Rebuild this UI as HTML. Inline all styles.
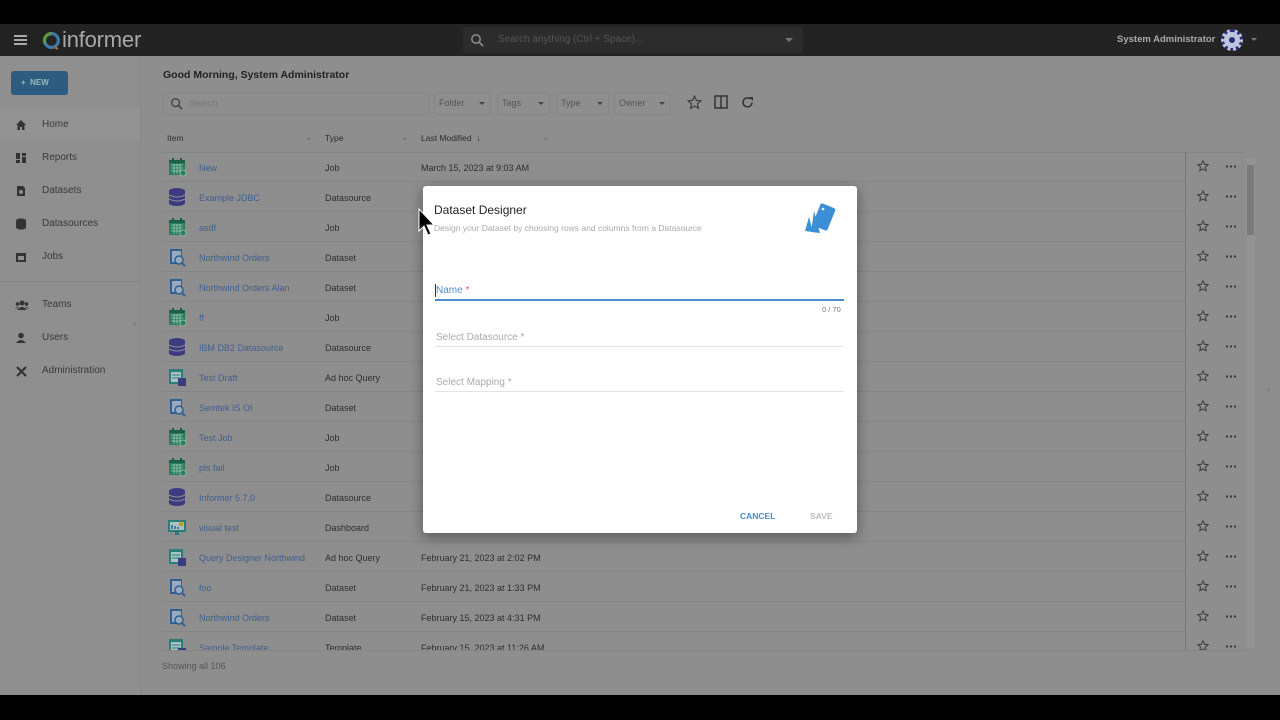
<!DOCTYPE html>
<html><head><meta charset="utf-8"><style>
*{margin:0;padding:0;box-sizing:border-box}
body{width:1280px;height:720px;background:#000;font-family:"Liberation Sans",sans-serif;position:relative;overflow:hidden}
.top{position:absolute;top:24px;left:0;width:1280px;height:32px;background:#232323}
.main{position:absolute;top:56px;left:0;width:1280px;height:639px;background:#8e8e8e}
.side{position:absolute;top:56px;left:0;width:141px;height:639px;background:#8f8f8f;border-right:1px solid #868686}
.nav{position:absolute;left:0;width:140px;height:32px;font-size:10px;color:#3a3a3a}
.nav span{position:absolute;left:42px;top:10px}
.nav svg{position:absolute;left:15px;top:10px}
.t{position:absolute;font-size:9px;color:#2e2e2e;white-space:nowrap}
.lk{color:#3f5f8e}
.row{position:absolute;left:162px;width:1023px;height:30px;border-bottom:1px solid #858585}
.star{position:absolute;left:1196px}
.dots{position:absolute;left:1225px;width:12px;height:3px;background:radial-gradient(circle,#3a3a3a 1.1px,transparent 1.3px) 0 0/4px 3px repeat-x}
.filt{position:absolute;top:92px;height:23px;border:1px solid #858585;border-radius:3px;font-size:9px;color:#555}
.modal{position:absolute;left:423px;top:186px;width:434px;height:347px;background:#fff;border-radius:3px;box-shadow:0 4px 14px rgba(0,0,0,.4)}
</style></head><body>
<svg width="0" height="0" style="position:absolute"><defs>
<symbol id="job" viewBox="0 0 20 20"><rect x="2" y="3" width="16" height="15" fill="#2b7d5c"/><rect x="2" y="3" width="16" height="3" fill="#1d5e44"/><rect x="5" y="1" width="2" height="4" fill="#1d5e44"/><rect x="13" y="1" width="2" height="4" fill="#1d5e44"/><path d="M4 8h12M4 11h12M4 14h12M7 7v10M10 7v10M13 7v10" stroke="#9ec8b5" stroke-width=".8"/><circle cx="16" cy="16" r="3" fill="#2b7d5c" stroke="#9ec8b5" stroke-width=".8"/></symbol>
<symbol id="db" viewBox="0 0 20 20"><ellipse cx="10" cy="4" rx="8" ry="3" fill="#3c3b80"/><rect x="2" y="4" width="16" height="12" fill="#3c3b80"/><ellipse cx="10" cy="16" rx="8" ry="3" fill="#3c3b80"/><path d="M2 8q8 4 16 0M2 12q8 4 16 0" stroke="#8e8e8e" stroke-width="1" fill="none"/></symbol>
<symbol id="ds" viewBox="0 0 20 20"><rect x="3" y="2" width="12" height="15" fill="#2f5f95"/><rect x="5" y="4" width="9" height="11" fill="#9ab"/><circle cx="12" cy="13" r="4" fill="#9ab" stroke="#2f5f95" stroke-width="1.5"/><path d="M15 16l3 3" stroke="#2f5f95" stroke-width="2"/></symbol>
<symbol id="aq" viewBox="0 0 20 20"><rect x="2" y="2" width="14" height="15" fill="#2b7d7a"/><rect x="4" y="5" width="10" height="10" fill="#a8c4c2"/><path d="M5 8h8M5 11h8" stroke="#2b7d7a"/><rect x="11" y="11" width="8" height="8" fill="#3c3b80"/></symbol>
<symbol id="dash" viewBox="0 0 20 20"><rect x="1" y="3" width="18" height="12" fill="#2b7d7a"/><rect x="3" y="5" width="14" height="8" fill="#a8c4c2"/><path d="M5 12V8M8 12V9M11 12V10" stroke="#2f5f95" stroke-width="1.5"/><circle cx="14" cy="7" r="2.5" fill="#b89a3a"/><path d="M8 15v3h4v-3" fill="#2b7d7a"/></symbol>
<symbol id="st" viewBox="0 0 24 24"><path d="M12 3l2.6 6 6.4.6-4.9 4.3 1.5 6.3L12 17l-5.6 3.2 1.5-6.3L3 9.6l6.4-.6z" fill="none" stroke="#3a3a3a" stroke-width="1.6"/></symbol>
</defs></svg>

<div class="top">
<div style="position:absolute;left:14px;top:11px;width:13px;height:2px;background:#aaa;box-shadow:0 4px #aaa,0 8px #aaa"></div>
<svg style="position:absolute;left:42px;top:7px" width="19" height="19" viewBox="0 0 18 18"><circle cx="9" cy="9" r="6.5" fill="none" stroke="#3c7aa8" stroke-width="3"/><path d="M9 2.5A6.5 6.5 0 0 0 3 12" fill="none" stroke="#5a9a3a" stroke-width="3"/><path d="M12 15.5l3 1.5" stroke="#b86a2a" stroke-width="2"/></svg>
<div style="position:absolute;left:62px;top:3px;font-size:22px;color:#a8a8a8;letter-spacing:-.2px">informer</div>
<div style="position:absolute;left:463px;top:3px;width:340px;height:26px;background:#2c2c2c;border-radius:3px"></div>
<svg style="position:absolute;left:470px;top:9px" width="14" height="14" viewBox="0 0 14 14"><circle cx="6" cy="6" r="4.2" fill="none" stroke="#888" stroke-width="1.6"/><path d="M9 9l4 4" stroke="#888" stroke-width="1.8"/></svg>
<div style="position:absolute;left:498px;top:10px;font-size:10px;color:#555">Search anything (Ctrl + Space)...</div>
<div style="position:absolute;left:785px;top:14px;border:4px solid transparent;border-top:4px solid #777"></div>
<div style="position:absolute;left:1117px;top:10px;font-size:9.5px;color:#aaa;font-weight:bold">System Administrator</div>
<div style="position:absolute;left:1221px;top:5px;width:22px;height:22px;border-radius:50%;background:#c0c4dc;border:3px dotted #2a2f78"><div style="position:absolute;left:5px;top:5px;width:6px;height:6px;border-radius:50%;background:#2a2f78"></div></div>
<div style="position:absolute;left:1251px;top:14px;border:3px solid transparent;border-top:3px solid #777"></div>
</div>

<div class="main"></div>
<div class="side">
<div style="position:absolute;left:11px;top:15px;width:57px;height:24px;background:#2e5b80;border-radius:3px;color:#9bb;font-size:8px;font-weight:bold;line-height:24px;padding-left:10px">+&nbsp; NEW</div>
<div class="nav" style="top:53px;background:#939393"><svg width="12" height="12" viewBox="0 0 12 12"><path d="M1 6L6 1l5 5H9.5v5h-2.5V8H5v3H2.5V6z" fill="#333"/></svg><span>Home</span></div>
<div class="nav" style="top:86px"><svg width="12" height="12" viewBox="0 0 12 12"><path d="M1 1h4v6H1zM7 1h4v3H7zM1 8h4v3H1zM7 5h4v6H7z" fill="#333"/></svg><span>Reports</span></div>
<div class="nav" style="top:119px"><svg width="12" height="12" viewBox="0 0 12 12"><path d="M2 1h6l2 2v8H2z" fill="#333"/><circle cx="6" cy="7" r="2" fill="#8f8f8f"/></svg><span>Datasets</span></div>
<div class="nav" style="top:152px"><svg width="12" height="12" viewBox="0 0 12 12"><ellipse cx="6" cy="2.5" rx="5" ry="2" fill="#333"/><rect x="1" y="2.5" width="10" height="7" fill="#333"/><ellipse cx="6" cy="9.5" rx="5" ry="2" fill="#333"/></svg><span>Datasources</span></div>
<div class="nav" style="top:185px"><svg width="12" height="12" viewBox="0 0 12 12"><rect x="1" y="2" width="10" height="9" fill="#333"/><rect x="3" y="5" width="6" height="4" fill="#8f8f8f"/></svg><span>Jobs</span></div>
<div style="position:absolute;left:0;top:225px;width:140px;border-top:1px solid #858585"></div>
<div class="nav" style="top:233px"><svg width="14" height="12" viewBox="0 0 14 12"><circle cx="7" cy="4" r="2.5" fill="#333"/><circle cx="2.5" cy="5" r="1.8" fill="#333"/><circle cx="11.5" cy="5" r="1.8" fill="#333"/><path d="M2 11q5-6 10 0M0 10q2-3 4-2M10 8q2-1 4 2" fill="#333"/></svg><span>Teams</span></div>
<div class="nav" style="top:266px"><svg width="12" height="12" viewBox="0 0 12 12"><circle cx="6" cy="3.5" r="2.8" fill="#333"/><path d="M1 11q5-6 10 0z" fill="#333"/></svg><span>Users</span></div>
<div class="nav" style="top:299px"><svg width="13" height="13" viewBox="0 0 13 13"><path d="M2 2l9 9M11 2L2 11" stroke="#333" stroke-width="2.2"/></svg><span>Administration</span></div>
<div style="position:absolute;left:133px;top:262px;font-size:9px;color:#666">‹</div>
</div>

<div class="t" style="left:163px;top:69px;font-size:10.5px;font-weight:bold;color:#222">Good Morning, System Administrator</div>
<div class="filt" style="left:163px;width:266px"><svg style="position:absolute;left:6px;top:4px" width="13" height="13" viewBox="0 0 14 14"><circle cx="6" cy="6" r="4.2" fill="none" stroke="#444" stroke-width="1.5"/><path d="M9 9l4 4" stroke="#444" stroke-width="1.7"/></svg><span style="position:absolute;left:25px;top:5px;color:#777">Search</span></div>
<div class="filt" style="left:434px;width:57px"><span style="position:absolute;left:4px;top:5px">Folder</span><i style="position:absolute;right:5px;top:9px;border:3px solid transparent;border-top:3px solid #444"></i></div>
<div class="filt" style="left:497px;width:53px"><span style="position:absolute;left:4px;top:5px">Tags</span><i style="position:absolute;right:5px;top:9px;border:3px solid transparent;border-top:3px solid #444"></i></div>
<div class="filt" style="left:556px;width:53px"><span style="position:absolute;left:4px;top:5px">Type</span><i style="position:absolute;right:5px;top:9px;border:3px solid transparent;border-top:3px solid #444"></i></div>
<div class="filt" style="left:614px;width:57px"><span style="position:absolute;left:4px;top:5px">Owner</span><i style="position:absolute;right:5px;top:9px;border:3px solid transparent;border-top:3px solid #444"></i></div>
<svg style="position:absolute;left:686px;top:94px" width="17" height="17"><use href="#st"/></svg>
<svg style="position:absolute;left:714px;top:95px" width="14" height="14" viewBox="0 0 14 14"><rect x="1" y="1" width="12" height="12" fill="none" stroke="#333" stroke-width="1.5"/><path d="M7 1v12" stroke="#333" stroke-width="1.5"/></svg>
<svg style="position:absolute;left:741px;top:96px" width="13" height="13" viewBox="0 0 13 13"><path d="M11 6.5A4.5 4.5 0 1 1 9.5 3" fill="none" stroke="#333" stroke-width="1.5"/><path d="M8 1h4v4z" fill="#333"/></svg>

<div class="t" style="left:167px;top:133px;font-size:8.5px">Item</div>
<div class="t" style="left:325px;top:133px;font-size:8.5px">Type</div>
<div class="t" style="left:421px;top:133px;font-size:8.5px">Last Modified &nbsp;↓</div>
<div class="t" style="left:305px;top:132px;color:#666">⌄</div><div class="t" style="left:401px;top:132px;color:#666">⌄</div><div class="t" style="left:542px;top:132px;color:#666">⌄</div>
<div style="position:absolute;left:162px;top:152px;width:1084px;border-top:1px solid #858585"></div>
<div style="position:absolute;left:1185px;top:152px;width:1px;height:498px;background:#777"></div>
<div style="position:absolute;left:1246px;top:158px;width:9px;height:490px;background:#939393"></div>
<div style="position:absolute;left:1247px;top:165px;width:7px;height:70px;background:#7a7a7a"></div>

<div class="row" style="top:152px"></div><svg style="position:absolute;left:167px;top:157px" width="20" height="20"><use href="#job"/></svg><div class="t lk" style="left:199px;top:163px">New</div><div class="t" style="left:325px;top:163px">Job</div><div class="t" style="left:421px;top:163px">March 15, 2023 at 9:03 AM</div>
<div class="row" style="top:182px"></div><svg style="position:absolute;left:167px;top:187px" width="20" height="20"><use href="#db"/></svg><div class="t lk" style="left:199px;top:193px">Example JDBC</div><div class="t" style="left:325px;top:193px">Datasource</div>
<div class="row" style="top:212px"></div><svg style="position:absolute;left:167px;top:217px" width="20" height="20"><use href="#job"/></svg><div class="t lk" style="left:199px;top:223px">asdf</div><div class="t" style="left:325px;top:223px">Job</div>
<div class="row" style="top:242px"></div><svg style="position:absolute;left:167px;top:247px" width="20" height="20"><use href="#ds"/></svg><div class="t lk" style="left:199px;top:253px">Northwind Orders</div><div class="t" style="left:325px;top:253px">Dataset</div>
<div class="row" style="top:272px"></div><svg style="position:absolute;left:167px;top:277px" width="20" height="20"><use href="#ds"/></svg><div class="t lk" style="left:199px;top:283px">Northwind Orders Alan</div><div class="t" style="left:325px;top:283px">Dataset</div>
<div class="row" style="top:302px"></div><svg style="position:absolute;left:167px;top:307px" width="20" height="20"><use href="#job"/></svg><div class="t lk" style="left:199px;top:313px">ff</div><div class="t" style="left:325px;top:313px">Job</div>
<div class="row" style="top:332px"></div><svg style="position:absolute;left:167px;top:337px" width="20" height="20"><use href="#db"/></svg><div class="t lk" style="left:199px;top:343px">IBM DB2 Datasource</div><div class="t" style="left:325px;top:343px">Datasource</div>
<div class="row" style="top:362px"></div><svg style="position:absolute;left:167px;top:367px" width="20" height="20"><use href="#aq"/></svg><div class="t lk" style="left:199px;top:373px">Test Draft</div><div class="t" style="left:325px;top:373px">Ad hoc Query</div>
<div class="row" style="top:392px"></div><svg style="position:absolute;left:167px;top:397px" width="20" height="20"><use href="#ds"/></svg><div class="t lk" style="left:199px;top:403px">Semtek IS OI</div><div class="t" style="left:325px;top:403px">Dataset</div>
<div class="row" style="top:422px"></div><svg style="position:absolute;left:167px;top:427px" width="20" height="20"><use href="#job"/></svg><div class="t lk" style="left:199px;top:433px">Test Job</div><div class="t" style="left:325px;top:433px">Job</div>
<div class="row" style="top:452px"></div><svg style="position:absolute;left:167px;top:457px" width="20" height="20"><use href="#job"/></svg><div class="t lk" style="left:199px;top:463px">pls fail</div><div class="t" style="left:325px;top:463px">Job</div>
<div class="row" style="top:482px"></div><svg style="position:absolute;left:167px;top:487px" width="20" height="20"><use href="#db"/></svg><div class="t lk" style="left:199px;top:493px">Informer 5.7.0</div><div class="t" style="left:325px;top:493px">Datasource</div>
<div class="row" style="top:512px"></div><svg style="position:absolute;left:167px;top:517px" width="20" height="20"><use href="#dash"/></svg><div class="t lk" style="left:199px;top:523px">visual test</div><div class="t" style="left:325px;top:523px">Dashboard</div>
<div class="row" style="top:542px"></div><svg style="position:absolute;left:167px;top:547px" width="20" height="20"><use href="#aq"/></svg><div class="t lk" style="left:199px;top:553px">Query Designer Northwind</div><div class="t" style="left:325px;top:553px">Ad hoc Query</div><div class="t" style="left:421px;top:553px">February 21, 2023 at 2:02 PM</div>
<div class="row" style="top:572px"></div><svg style="position:absolute;left:167px;top:577px" width="20" height="20"><use href="#ds"/></svg><div class="t lk" style="left:199px;top:583px">foo</div><div class="t" style="left:325px;top:583px">Dataset</div><div class="t" style="left:421px;top:583px">February 21, 2023 at 1:33 PM</div>
<div class="row" style="top:602px"></div><svg style="position:absolute;left:167px;top:607px" width="20" height="20"><use href="#ds"/></svg><div class="t lk" style="left:199px;top:613px">Northwind Orders</div><div class="t" style="left:325px;top:613px">Dataset</div><div class="t" style="left:421px;top:613px">February 15, 2023 at 4:31 PM</div>
<div style="position:absolute;left:162px;top:632px;width:1084px;height:18px;overflow:hidden"><svg style="position:absolute;left:5px;top:5px" width="20" height="20"><use href="#aq"/></svg><div class="t lk" style="left:37px;top:11px">Sample Template</div><div class="t" style="left:163px;top:11px">Template</div><div class="t" style="left:259px;top:11px">February 15, 2023 at 11:26 AM</div></div>
<div style="position:absolute;left:162px;top:650px;width:1084px;border-top:1px solid #858585"></div>
<div class="t" style="left:162px;top:661px;color:#555">Showing all 106</div>

<svg class="star" style="top:159px" width="14" height="14"><use href="#st"/></svg><div class="dots" style="top:165px"></div>
<svg class="star" style="top:189px" width="14" height="14"><use href="#st"/></svg><div class="dots" style="top:195px"></div>
<svg class="star" style="top:219px" width="14" height="14"><use href="#st"/></svg><div class="dots" style="top:225px"></div>
<svg class="star" style="top:249px" width="14" height="14"><use href="#st"/></svg><div class="dots" style="top:255px"></div>
<svg class="star" style="top:279px" width="14" height="14"><use href="#st"/></svg><div class="dots" style="top:285px"></div>
<svg class="star" style="top:309px" width="14" height="14"><use href="#st"/></svg><div class="dots" style="top:315px"></div>
<svg class="star" style="top:339px" width="14" height="14"><use href="#st"/></svg><div class="dots" style="top:345px"></div>
<svg class="star" style="top:369px" width="14" height="14"><use href="#st"/></svg><div class="dots" style="top:375px"></div>
<svg class="star" style="top:399px" width="14" height="14"><use href="#st"/></svg><div class="dots" style="top:405px"></div>
<svg class="star" style="top:429px" width="14" height="14"><use href="#st"/></svg><div class="dots" style="top:435px"></div>
<svg class="star" style="top:459px" width="14" height="14"><use href="#st"/></svg><div class="dots" style="top:465px"></div>
<svg class="star" style="top:489px" width="14" height="14"><use href="#st"/></svg><div class="dots" style="top:495px"></div>
<svg class="star" style="top:519px" width="14" height="14"><use href="#st"/></svg><div class="dots" style="top:525px"></div>
<svg class="star" style="top:549px" width="14" height="14"><use href="#st"/></svg><div class="dots" style="top:555px"></div>
<svg class="star" style="top:579px" width="14" height="14"><use href="#st"/></svg><div class="dots" style="top:585px"></div>
<svg class="star" style="top:609px" width="14" height="14"><use href="#st"/></svg><div class="dots" style="top:615px"></div>
<svg class="star" style="top:639px" width="14" height="11" viewBox="0 0 14 11"><use href="#st" width="14" height="14"/></svg><div class="dots" style="top:645px"></div>
<div class="t" style="left:1267px;top:384px;color:#666">‹</div>

<div class="modal">
<div class="t" style="left:11px;top:17px;font-size:12px;color:#222">Dataset Designer</div>
<div class="t" style="left:11px;top:37px;font-size:8.5px;color:#aaa">Design your Dataset by choosing rows and columns from a Datasource</div>
<svg style="position:absolute;left:376px;top:15px" width="40" height="36" viewBox="0 0 40 36"><path d="M6 30L10 16l4 15z" fill="#3a8fd6"/><path d="M12 31L15 10l6 22z" fill="#3a8fd6"/><rect x="17" y="4" width="16" height="24" rx="2" transform="rotate(22 25 16)" fill="#3a8fd6"/><circle cx="24" cy="8" r="1.3" fill="#fff"/></svg>
<div style="position:absolute;left:12px;top:98px;width:1px;height:13px;background:#333"></div>
<div class="t" style="left:13px;top:99px;font-size:10px;color:#4a8ccc">Name <span style="color:#e57">*</span></div>
<div style="position:absolute;left:12px;top:113px;width:409px;height:2px;background:#4a8ccc"></div>
<div class="t" style="left:399px;top:119px;font-size:7.5px;color:#777">0 / 70</div>
<div class="t" style="left:13px;top:146px;font-size:10px;color:#aaa">Select Datasource *</div>
<div style="position:absolute;left:12px;top:160px;width:409px;height:1px;background:#e4e4e4"></div>
<div class="t" style="left:13px;top:191px;font-size:10px;color:#aaa">Select Mapping *</div>
<div style="position:absolute;left:12px;top:205px;width:409px;height:1px;background:#e4e4e4"></div>
<div class="t" style="left:317px;top:325px;font-size:8.5px;font-weight:bold;color:#4a8ccc">CANCEL</div>
<div class="t" style="left:387px;top:325px;font-size:8.5px;font-weight:bold;color:#bbb">SAVE</div>
</div>
<svg style="position:absolute;left:418px;top:208px" width="16" height="28" viewBox="0 0 16 28"><path d="M1 1v22l5-5 4 9 3-1-4-9h7z" fill="#000" stroke="#fff" stroke-width="1"/></svg>
</body></html>
